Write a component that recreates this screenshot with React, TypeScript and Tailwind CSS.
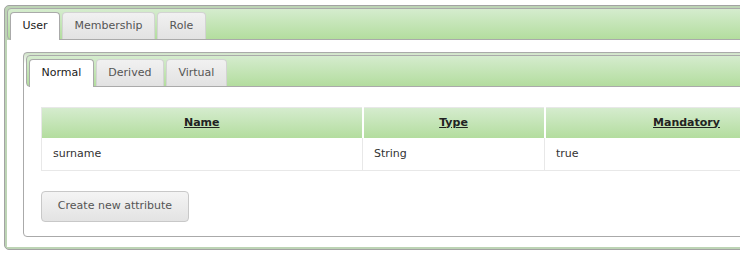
import React from 'react';

const font = { fontFamily: '"DejaVu Sans", Verdana, sans-serif' };

interface TabBarProps {
  tabs: string[];
  active: number;
}

const TabBar: React.FC<TabBarProps> = ({ tabs, active }) => (
  <div className="flex items-end h-[32px] pl-[2px] border border-[#aaaaaa] rounded-[4px] bg-linear-to-b from-[#d5ecce] to-[#b3dd9e]">
    {tabs.map((t, i) =>
      i === active ? (
        <div
          key={t}
          className="relative z-10 mr-[2px] mb-[-1px] h-[28px] px-[11.5px] flex items-center border border-b-0 border-[#aaaaaa] rounded-t-[4px] bg-white text-[#212121]"
        >
          {t}
        </div>
      ) : (
        <div
          key={t}
          className="mr-[2px] h-[27px] px-[11.5px] flex items-center border border-b-0 border-[#d3d3d3] rounded-t-[4px] bg-linear-to-b from-[#f1f1f1] to-[#e2e2e2] text-[#555555]"
        >
          {t}
        </div>
      )
    )}
  </div>
);

export default function App() {
  return (
    <div className="w-[740px] h-[275px] overflow-hidden bg-white text-[11px]" style={font}>
      <div className="ml-[4px] mt-[5px] w-[900px] border border-[#a3a3a3] rounded-[5px] p-[2px] bg-[#bdd4b5]">
        <TabBar tabs={['User', 'Membership', 'Role']} active={0} />

        {/* outer panel */}
        <div className="bg-white pt-[12px] px-[16px] pb-[10px]">
          <div className="border border-[#aaaaaa] rounded-[4px] p-[2px] bg-linear-to-b from-[#cfe3c7] from-0% to-white to-[6%]">
            <TabBar tabs={['Normal', 'Derived', 'Virtual']} active={0} />

            {/* inner panel */}
            <div className="bg-white pt-[20px] pl-[15px] pb-[12px]">
              <table className="border-collapse border border-[#e8e8e8]">
                <thead>
                  <tr className="h-[30px] bg-linear-to-b from-[#d5ecce] to-[#b3dd9e]">
                    <th className="w-[321px] text-center font-bold text-[#222222] underline border-r-2 border-white">Name</th>
                    <th className="w-[182px] text-center font-bold text-[#222222] underline border-r-2 border-white">Type</th>
                    <th className="w-[284px] text-center font-bold text-[#222222] underline border-r-2 border-white">Mandatory</th>
                  </tr>
                </thead>
                <tbody>
                  <tr className="h-[33px] text-[#333333]">
                    <td className="pl-[11px] border-r border-[#e8e8e8]">surname</td>
                    <td className="pl-[11px] border-r border-[#e8e8e8]">String</td>
                    <td className="pl-[11px] border-r border-[#e8e8e8]">true</td>
                  </tr>
                </tbody>
              </table>

              <button className="mt-[20px] h-[31px] w-[148px] border border-[#c8c8c8] rounded-[4px] bg-linear-to-b from-[#f4f4f4] to-[#e3e3e3] text-[#555555] text-[11px]">
                Create new attribute
              </button>
            </div>
          </div>
        </div>
      </div>
    </div>
  );
}
